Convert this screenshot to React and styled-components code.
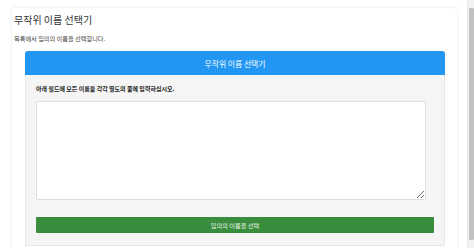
import React from 'react'
import styled, { createGlobalStyle } from 'styled-components'

const GlobalStyle = createGlobalStyle`
  html, body {
    margin: 0;
    padding: 0;
    background: #fff;
    font-family: "Noto Sans CJK KR", "Noto Sans", sans-serif;
    color: #333;
  }
`

const Page = styled.div`
  padding: 8px 17px 6px 12px;
`

// the browser's scrollbar, drawn over the right edge of the page
const ScrollTrack = styled.div`
  position: fixed;
  top: 0;
  right: 0;
  width: 7px;
  height: 100%;
  background: #f1f1f1;
  border-left: 1px solid #e8e8e8;
  display: flex;
  flex-direction: column;
  align-items: center;
  padding: 8px 0;
  box-sizing: border-box;
`

const ScrollThumb = styled.div`
  width: 5px;
  flex: 1;
  background: #c1c1c1;
  border-radius: 1px;
`

const Card = styled.div`
  background: #fff;
  padding: 2px 12px 4px 2px;
  box-shadow: 0 0 3px rgba(0, 0, 0, 0.12);
  border-radius: 2px;
`

const Title = styled.h1`
  margin: 0;
  font-size: 10px;
  font-weight: 400;
  line-height: 20px;
  color: #333;
`

const Subtitle = styled.p`
  margin: 2px 0 0;
  font-size: 6.2px;
  line-height: 14px;
  color: #444;
`

const Panel = styled.section`
  margin: 5px 0 0 11px;
  background: #f5f5f5;
  border: 1px solid #e6e6e6;
  border-top: none;
  border-radius: 3px 3px 0 0;
`

const PanelHeader = styled.div`
  height: 24px;
  margin: 0 -1px;
  display: flex;
  align-items: center;
  justify-content: center;
  background: #2196f3;
  color: #fff;
  font-size: 7.8px;
  border-radius: 3px 3px 0 0;
`

const PanelBody = styled.div`
  padding: 7px 10px 12px;
  display: flex;
  flex-direction: column;
`

const Label = styled.label`
  font-size: 6px;
  font-weight: 700;
  line-height: 14px;
  color: #222;
`

const NameInput = styled.textarea`
  box-sizing: border-box;
  width: calc(100% - 8px);
  height: 99px;
  margin-top: 5px;
  border: 1px solid #dedede;
  border-radius: 2px;
  background: #fff;
  font-family: inherit;
  font-size: 8px;
`

const PickButton = styled.button`
  margin-top: 17px;
  height: 16px;
  border: none;
  border-radius: 1px;
  background: #388e3c;
  color: #e8f2e8;
  font-family: inherit;
  font-size: 6.2px;
  cursor: pointer;
`

export default function App() {
  return (
    <>
      <GlobalStyle />
      <Page>
        <Card>
          <Title>무작위 이름 선택기</Title>
          <Subtitle>목록에서 임의의 이름을 선택합니다.</Subtitle>
          <Panel>
            <PanelHeader>무작위 이름 선택기</PanelHeader>
            <PanelBody>
              <Label>아래 필드에 모든 이름을 각각 별도의 줄에 입력하십시오.</Label>
              <NameInput />
              <PickButton>임의의 이름을 선택</PickButton>
            </PanelBody>
          </Panel>
        </Card>
      </Page>
      <ScrollTrack>
        <ScrollThumb />
      </ScrollTrack>
    </>
  )
}
